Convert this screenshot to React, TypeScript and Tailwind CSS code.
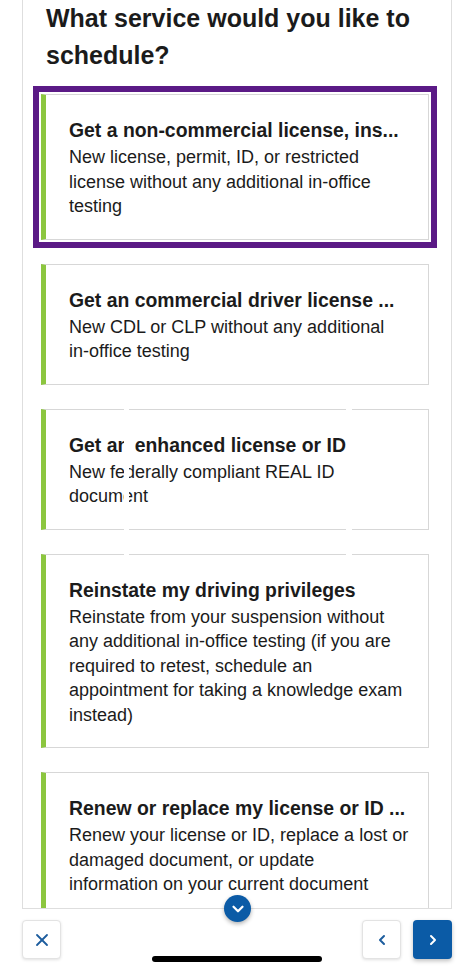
import React from "react";
import { ChevronDown, ChevronLeft, ChevronRight, X } from "lucide-react";

type Item = { title: string; lines: string[]; selected?: boolean };

const items: Item[] = [
  {
    title: "Get a non-commercial license, ins...",
    lines: ["New license, permit, ID, or restricted", "license without any additional in-office", "testing"],
    selected: true,
  },
  {
    title: "Get an commercial driver license ...",
    lines: ["New CDL or CLP without any additional", "in-office testing"],
  },
  {
    title: "Get an enhanced license or ID",
    lines: ["New federally compliant REAL ID", "document"],
  },
  {
    title: "Reinstate my driving privileges",
    lines: [
      "Reinstate from your suspension without",
      "any additional in-office testing (if you are",
      "required to retest, schedule an",
      "appointment for taking a knowledge exam",
      "instead)",
    ],
  },
  {
    title: "Renew or replace my license or ID ...",
    lines: [
      "Renew your license or ID, replace a lost or",
      "damaged document, or update",
      "information on your current document",
    ],
  },
];

function Card({ item }: { item: Item }) {
  return (
    <div
      className={
        "w-[388px] shrink-0 rounded-none border border-[#d7d7d7] border-l-[5px] border-l-[#8cc63f] bg-white pl-[23px] pr-[12px] pt-[22px] pb-[20px] " +
        (item.selected ? "outline-[6px] outline-solid outline-offset-[2px] outline-[#5b1a86]" : "")
      }
    >
      <div className="whitespace-nowrap text-[19.4px] font-bold leading-[26px] text-[#1b1b1b] mb-[2px]">
        {item.title}
      </div>
      <div className="text-[18px] leading-[24.5px] text-[#1b1b1b]">
        {item.lines.map((l) => (
          <div key={l} className="whitespace-nowrap">
            {l}
          </div>
        ))}
      </div>
    </div>
  );
}

export default function App() {
  return (
    <div
      className="relative h-[971px] w-[474px] overflow-hidden bg-white"
      style={{ fontFamily: '"Liberation Sans", Arial, sans-serif' }}
    >
      <div className="relative ml-[22px] h-[909px] w-[430px] overflow-hidden border-x border-b border-[#dedede] bg-white">
        <h1 className="pl-[23px] text-[25px] font-bold leading-[37px] text-[#1b1b1b]">
          What service would you like to schedule?
        </h1>
        <div className="mt-5 flex flex-col gap-6 pl-[18px]">
          {items.map((it) => (
            <Card key={it.title} item={it} />
          ))}
        </div>
        {/* rendering artefact strips */}
        <div className="absolute left-[101px] top-[398px] h-[162px] w-[5px] bg-white" />
        <div className="absolute left-[323px] top-[398px] h-[162px] w-[6px] bg-white" />
      </div>

      {/* scroll-down button */}
      <div className="absolute left-[224px] top-[895px] flex h-[27px] w-[27px] items-center justify-center rounded-full bg-[#0b5ba6] shadow-[0_2px_4px_rgba(0,0,0,0.3)]">
        <ChevronDown size={18} strokeWidth={3} className="text-white" />
      </div>

      {/* footer */}
      <div className="flex items-start justify-between px-[22px] pt-[11px]">
        <button className="flex h-[39px] w-[39px] items-center justify-center rounded-[4px] border border-[#e3e3e3] bg-white shadow-[0_1px_3px_rgba(0,0,0,0.12)]">
          <X size={20} strokeWidth={2.2} className="text-[#1d5d9e]" />
        </button>
        <div className="flex gap-[12px]">
          <button className="flex h-[39px] w-[39px] items-center justify-center rounded-[4px] border border-[#e3e3e3] bg-white shadow-[0_1px_3px_rgba(0,0,0,0.12)]">
            <ChevronLeft size={16} strokeWidth={3} className="text-[#1d5d9e]" />
          </button>
          <button className="flex h-[39px] w-[39px] items-center justify-center rounded-[4px] bg-[#0b5ba6] shadow-[0_2px_4px_rgba(0,0,0,0.25)]">
            <ChevronRight size={16} strokeWidth={3} className="text-white" />
          </button>
        </div>
      </div>

      {/* home indicator */}
      <div className="absolute left-[152px] top-[956px] h-[6px] w-[170px] rounded-full bg-black" />
    </div>
  );
}
